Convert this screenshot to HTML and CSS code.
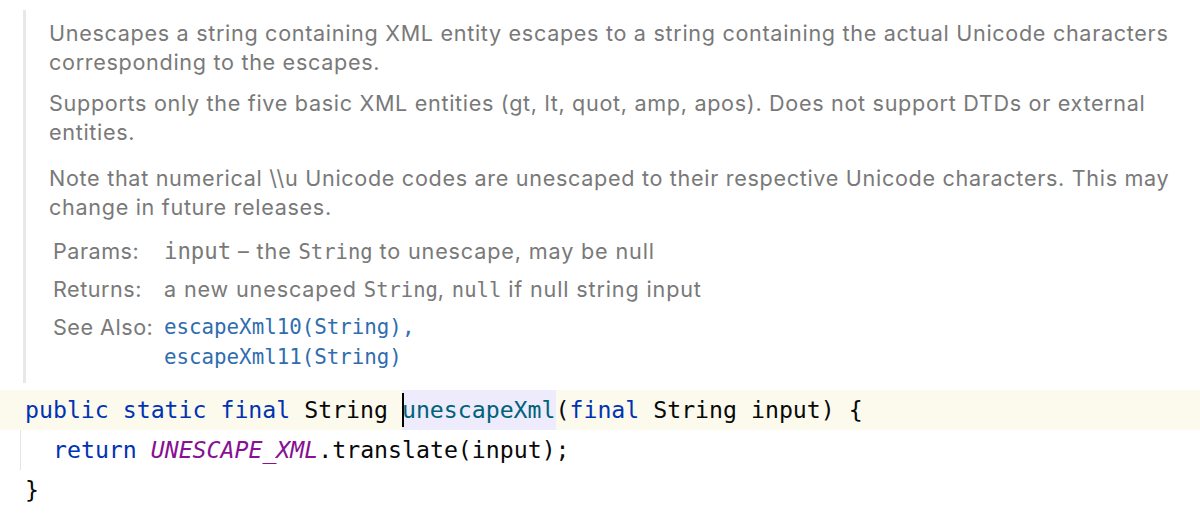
FILE: index.html
```html
<!DOCTYPE html>
<html>
<head>
<meta charset="utf-8">
<link rel="stylesheet" href="styles.css">
</head>
<body>
<div class="doc">
  <p class="p1">Unescapes a string containing XML entity escapes to a string containing the actual Unicode characters corresponding to the escapes.</p>
  <p class="p2">Supports only the five basic XML entities (gt, lt, quot, amp, apos). Does not support DTDs or external entities.</p>
  <p class="p3">Note that numerical \\u Unicode codes are unescaped to their respective Unicode characters. This may change in future releases.</p>
  <div class="tags">
    <div class="tag-label r-params">Params:</div>
    <div class="tag-value r-params"><code class="pname">input</code> – the <code class="ic">String</code> to unescape, may be null</div>
    <div class="tag-label r-returns">Returns:</div>
    <div class="tag-value r-returns">a new unescaped <code class="ic">String</code>, <code class="ic">null</code> if null string input</div>
    <div class="tag-label r-see">See Also:</div>
    <div class="tag-value r-see links"><a class="link">escapeXml10(String)</a>,<br><a class="link">escapeXml11(String)</a></div>
  </div>
</div>
<div class="code">
  <div class="line current"><span class="kw">public static final</span> String <span class="ident-hl"><span class="caret"></span><span class="decl">unescapeXml</span></span>(<span class="kw">final</span> String input) {</div>
  <div class="line indented"><span class="kw">return</span> <span class="field">UNESCAPE_XML</span>.translate(input);</div>
  <div class="line">}</div>
</div>
</body>
</html>
```
FILE: styles.css
```css
html, body {
  margin: 0;
  padding: 0;
  background: #ffffff;
}
body {
  width: 1200px;
  height: 520px;
  overflow: hidden;
}
.doc {
  margin: 10px 0 0 23px;
  border-left: 3px solid #e8e8e8;
  padding: 9px 0 11px 23px;
  font-family: Inter, "Noto Sans", sans-serif;
  font-size: 21.6px;
  letter-spacing: 0.68px;
  line-height: 29px;
  color: #797979;
}
.doc p {
  margin: 0;
}
.p1 { margin-bottom: 12px !important; }
.p2 { margin-bottom: 17px !important; }
.p3 { margin-bottom: 14px !important; }
.tags {
  display: grid;
  grid-template-columns: 111px 1fr;
  margin-left: 4px;
}
.tag-label, .tag-value {
  line-height: 30px;
}
.tag-label {
  letter-spacing: 0.5px;
}
.tag-value {
  letter-spacing: 0.85px;
}
.r-params { padding-bottom: 7px; }
.r-returns { padding-bottom: 7px; }
.pname {
  font-family: "DejaVu Sans Mono", monospace;
  font-size: 22.3px;
  letter-spacing: 0;
}
.ic {
  font-family: "DejaVu Sans Mono", monospace;
  font-size: 20.5px;
  letter-spacing: 0;
}
.links {
  font-family: "DejaVu Sans Mono", monospace;
  font-size: 20.8px;
  letter-spacing: 0;
  color: #2f6db0;
}
.link {
  color: #2f6db0;
}
.code {
  margin-top: 7px;
  font-family: "DejaVu Sans Mono", monospace;
  font-size: 23.2px;
  color: #080808;
}
.line {
  height: 40px;
  line-height: 40px;
  padding-left: 25px;
  white-space: pre;
}
.line.current {
  background: #fcfaed;
}
.line.indented {
  margin-left: 20px;
  padding-left: 32px;
  border-left: 1px solid #e4e4e4;
}
.kw {
  color: #0033b3;
}
.decl {
  color: #00627a;
}
.field {
  color: #871094;
  font-style: italic;
}
.ident-hl {
  display: inline-block;
  position: relative;
  height: 40px;
  vertical-align: top;
  background: #edebfc;
}
.caret {
  position: absolute;
  left: 0;
  top: 3px;
  width: 2px;
  height: 34px;
  background: #000000;
}
```
